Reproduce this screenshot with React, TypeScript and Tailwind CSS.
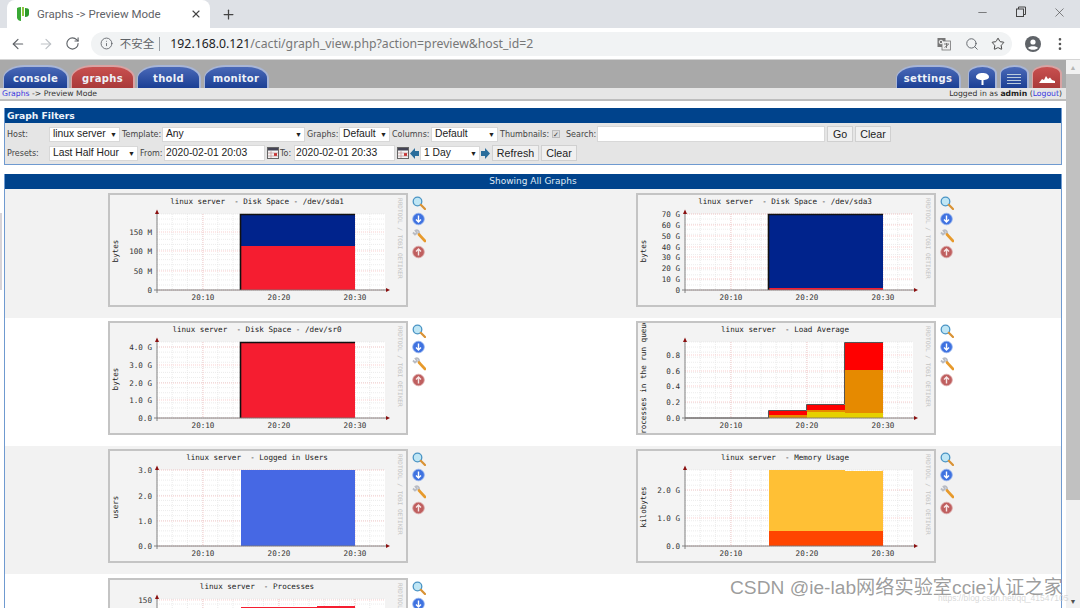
import React from 'react';
import { ArrowLeft, ArrowRight, RotateCw, Info, Plus, X, Minus, Search, Star, EllipsisVertical } from 'lucide-react';

const MONO = '"DejaVu Sans Mono", monospace';

type Block = { x: number; w: number; y: number; h: number; fill: string };
type GraphConfig = {
  title: string;
  yLabel: string;
  ticks: [string, number][];
  blocks: Block[];
  lines?: string[];
  lineWidth?: number;
  lineColor?: string;
};

const graphs: GraphConfig[] = [
  {
    title: 'linux server  - Disk Space - /dev/sda1',
    yLabel: 'bytes',
    ticks: [['150 M', 39], ['100 M', 58], ['50 M', 78], ['0', 97]],
    blocks: [
      { x: 133, w: 114, y: 21, h: 32, fill: '#00238c' },
      { x: 133, w: 114, y: 53, h: 44, fill: '#f51d30' },
    ],
    lines: ['M132.5 97V21.5H247'],
  },
  {
    title: 'linux server  - Disk Space - /dev/sda3',
    yLabel: 'bytes',
    ticks: [['70 G', 21], ['60 G', 32], ['50 G', 43], ['40 G', 54], ['30 G', 64], ['20 G', 75], ['10 G', 86], ['0', 97]],
    blocks: [
      { x: 133, w: 114, y: 21, h: 74, fill: '#00238c' },
      { x: 133, w: 114, y: 95, h: 2, fill: '#f51d30' },
    ],
    lines: ['M132.5 97V21.5H247'],
  },
  {
    title: 'linux server  - Disk Space - /dev/sr0',
    yLabel: 'bytes',
    ticks: [['4.0 G', 26], ['3.0 G', 44], ['2.0 G', 62], ['1.0 G', 79], ['0.0', 97]],
    blocks: [{ x: 133, w: 114, y: 21, h: 76, fill: '#f51d30' }],
    lines: ['M132.5 97V21.5H247'],
  },
  {
    title: 'linux server  - Load Average',
    yLabel: 'processes in the run queue',
    ticks: [['0.8', 34], ['0.6', 50], ['0.4', 65], ['0.2', 81], ['0.0', 97]],
    blocks: [
      { x: 133, w: 38, y: 90, h: 4, fill: '#ff0000' },
      { x: 133, w: 38, y: 94, h: 3, fill: '#e68a00' },
      { x: 171, w: 38, y: 84, h: 5, fill: '#ff0000' },
      { x: 171, w: 38, y: 89, h: 2, fill: '#e68a00' },
      { x: 171, w: 38, y: 91, h: 6, fill: '#e6d000' },
      { x: 209, w: 38, y: 21, h: 28, fill: '#ff0000' },
      { x: 209, w: 38, y: 49, h: 43, fill: '#e68a00' },
      { x: 209, w: 38, y: 92, h: 5, fill: '#e6d000' },
    ],
    lines: ['M49 97H132.5V89.5H170.5V83.5H208.5V21.5H247'],
    lineWidth: 1,
    lineColor: '#555',
  },
  {
    title: 'linux server  - Logged in Users',
    yLabel: 'users',
    ticks: [['3.0', 21], ['2.0', 47], ['1.0', 72], ['0.0', 97]],
    blocks: [{ x: 133, w: 114, y: 21, h: 76, fill: '#4668e4' }],
  },
  {
    title: 'linux server  - Memory Usage',
    yLabel: 'kilobytes',
    ticks: [['2.0 G', 41], ['1.0 G', 69], ['0.0', 97]],
    blocks: [
      { x: 133, w: 76, y: 21, h: 61, fill: '#ffc035' },
      { x: 209, w: 38, y: 22, h: 60, fill: '#ffc035' },
      { x: 133, w: 114, y: 82, h: 15, fill: '#ff4500' },
    ],
  },
  {
    title: 'linux server  - Processes',
    yLabel: 'processes',
    ticks: [['150', 22], ['100', 47], ['50', 72], ['0', 97]],
    blocks: [
      { x: 133, w: 76, y: 29, h: 3, fill: '#f51d30' },
      { x: 209, w: 38, y: 28, h: 4, fill: '#f51d30' },
    ],
  },
];

const minorX = Array.from({ length: 15 }, (_, i) => 49 + i * 15.2);
const minorY = Array.from({ length: 16 }, (_, i) => 21 + i * 5.07);

function Graph({ g }: { g: GraphConfig }) {
  return (
    <div className="w-[300px] h-[114px] shrink-0 border-2 border-[#c4c4c4] bg-[#f3f3f3]">
      <svg width="296" height="110" viewBox="2 2 296 110" className="block">
        <rect x="49" y="21" width="228" height="76" fill="#fff" />
        {minorY.map((y) => (
          <line key={y} x1="49" x2="277" y1={y} y2={y} stroke="#e4e4e4" strokeWidth="0.7" strokeDasharray="1 1" />
        ))}
        {minorX.map((x) => (
          <line key={x} x1={x} x2={x} y1="21" y2="97" stroke="#e4e4e4" strokeWidth="0.7" strokeDasharray="1 1" />
        ))}
        {g.ticks.map(([, y]) => (
          <line key={y} x1="49" x2="277" y1={y} y2={y} stroke="#f8bcbc" strokeWidth="0.7" strokeDasharray="1 1" />
        ))}
        {[95, 171, 247].map((x) => (
          <line key={x} x1={x} x2={x} y1="21" y2="97" stroke="#f8bcbc" strokeWidth="0.7" strokeDasharray="1 1" />
        ))}
        {g.blocks.map((b, i) => (
          <rect key={i} x={b.x} y={b.y} width={b.w} height={b.h} fill={b.fill} />
        ))}
        {g.lines?.map((d) => (
          <path key={d} d={d} fill="none" stroke={g.lineColor ?? '#111'} strokeWidth={g.lineWidth ?? 1.6} />
        ))}
        <path d="M46 97H279M49 100V19" stroke="#777" strokeWidth="0.9" fill="none" />
        <path d="M278 95L282 97L278 99ZM47 21L49 16.5L51 21Z" fill="#8a1010" />
        <g fontFamily={MONO} fontSize="7.6" fill="#333">
          <text x="149" y="11" textAnchor="middle" xmlSpace="preserve" fill="#222">{g.title}</text>
          {g.ticks.map(([t, y]) => (
            <text key={t} x="44" y={y + 3} textAnchor="end">{t}</text>
          ))}
          {[['20:10', 95], ['20:20', 171], ['20:30', 247]].map(([t, x]) => (
            <text key={t} x={x} y="107" textAnchor="middle">{t}</text>
          ))}
          <text transform={`translate(10 58) rotate(-90)`} textAnchor="middle" fill="#222">{g.yLabel}</text>
        </g>
        <text transform="translate(290 5) rotate(90)" fontFamily={MONO} fontSize="6.1" fill="#c4c4c4">RRDTOOL / TOBI OETIKER</text>
      </svg>
    </div>
  );
}

function GraphIcons() {
  return (
    <div className="flex flex-col ml-[4px] pt-[3px] gap-[2.4px]">
      <svg width="14" height="14" viewBox="0 0 14 14">
        <circle cx="5.5" cy="5.5" r="4.3" fill="#bfe6f5" stroke="#4a94c4" strokeWidth="1.3" />
        <path d="M8.8 8.8L13 13" stroke="#d99234" strokeWidth="2.2" strokeLinecap="round" />
      </svg>
      <svg width="14" height="14" viewBox="0 0 14 14">
        <circle cx="6.5" cy="7" r="5.8" fill="#3f72e0" stroke="#8fb0ee" strokeWidth="0.8" />
        <path d="M6.5 3.5V9.5M4 7.5L6.5 10L9 7.5" stroke="#fff" strokeWidth="1.4" fill="none" />
      </svg>
      <svg width="14" height="14" viewBox="0 0 14 14">
        <path d="M1 3.5L3 5.5L5 4L3.5 1.5C5.5 .5 7.5 2 7 4.5L8 6" stroke="#b9bcc4" strokeWidth="1.8" fill="none" />
        <path d="M7 5.5L13 12" stroke="#e79a2c" strokeWidth="2.6" strokeLinecap="round" />
      </svg>
      <svg width="14" height="14" viewBox="0 0 14 14">
        <circle cx="6.5" cy="7" r="5.8" fill="#bf5f5f" stroke="#dba6a6" strokeWidth="0.8" />
        <path d="M6.5 10.5V4.5M4 6.5L6.5 4L9 6.5" stroke="#f6e6e6" strokeWidth="1.4" fill="none" />
      </svg>
    </div>
  );
}

function Row({ left, right, shaded, className }: { left: GraphConfig; right?: GraphConfig; shaded: boolean; className: string }) {
  return (
    <div className={`grid grid-cols-2 ${className} ${shaded ? 'bg-[#f2f2f2]' : 'bg-white'}`}>
      <div className="flex pl-[103px]">
        <Graph g={left} />
        <GraphIcons />
      </div>
      {right && (
        <div className="flex pl-[103px]">
          <Graph g={right} />
          <GraphIcons />
        </div>
      )}
    </div>
  );
}

function NavTab({ label, width, red, children }: { label?: string; width: string; red?: boolean; children?: React.ReactNode }) {
  return (
    <div
      className={`${width} h-[23px] shrink-0 flex items-center justify-center pt-[2px] border-t-2 border-r-2 border-l [border-radius:22px_22px_0_0/13px_13px_0_0] bg-linear-to-b ${
        red ? 'from-[#c9504f] to-[#a93a3a] border-[#d9a3a3]' : 'from-[#4a69b8] to-[#1b3f94] border-[#a9b6d6]'
      }`}
    >
      {label && <span className="font-['DejaVu_Sans',sans-serif] font-bold text-[10px] tracking-[0.3px] text-[#eef1f8]">{label}</span>}
      {children}
    </div>
  );
}

function Sel({ text, width }: { text: string; width: string }) {
  return (
    <div className={`${width} h-[15px] shrink-0 bg-white border border-[#d8d8d8] flex items-center justify-between pl-[3px] pr-[2px] text-[10.3px] text-[#222]`}>
      <span>{text}</span>
      <span className="text-[7px] leading-none text-[#222]">▼</span>
    </div>
  );
}

function Txt({ text, width }: { text?: string; width: string }) {
  return (
    <div className={`${width} h-[16px] shrink-0 bg-white border border-[#d8d8d8] flex items-center pl-[1px] text-[10.3px] text-[#222]`}>{text}</div>
  );
}

function Lbl({ text, width }: { text: string; width: string }) {
  return <div className={`${width} shrink-0 pt-[1px] font-['DejaVu_Sans',sans-serif] text-[8px] text-[#444]`}>{text}</div>;
}

function Btn({ text, width }: { text: string; width: string }) {
  return (
    <div className={`${width} h-[16px] shrink-0 bg-[#f0f0f0] border border-[#d0d0d0] flex items-center justify-center text-[10.67px] text-[#222]`}>{text}</div>
  );
}

function Calendar() {
  return (
    <svg width="12" height="12" viewBox="0 0 12 12" className="shrink-0">
      <rect x="0.5" y="0.5" width="11" height="11" fill="#f4f4f4" stroke="#666" />
      <rect x="1" y="1" width="10" height="2.5" fill="#445" />
      <rect x="7" y="6" width="3" height="3" fill="#c33" />
      <path d="M1 6H11M1 9H11M4 4V11" stroke="#b88" strokeWidth="0.6" />
    </svg>
  );
}

function Shift({ flip }: { flip?: boolean }) {
  return (
    <svg width="9" height="11" viewBox="0 0 9 11" className="shrink-0">
      <path d={flip ? 'M0 3H4V0L9 5.5L4 11V8H0Z' : 'M9 3H5V0L0 5.5L5 11V8H9Z'} fill="#2a6d9c" />
    </svg>
  );
}

export default function App() {
  return (
    <div className="relative w-[1080px] h-[608px] overflow-hidden flex flex-col bg-white font-['Liberation_Sans',sans-serif]">
      {/* browser tab strip */}
      <div className="h-[28px] shrink-0 bg-[#dee1e6] flex items-stretch">
        <div className="ml-[7px] w-[203px] bg-white rounded-t-[8px] flex items-center pl-[9px] pr-[8px]">
          <svg width="14" height="16" viewBox="0 0 14 16" className="shrink-0">
            <path d="M1 2Q3 1 5 1V15Q2 15 1 12Z" fill="#39a935" />
            <path d="M6 1H8V10H6Z" fill="#8cc63f" />
            <path d="M9 2Q13 2 13 4V8Q13 11 9 11Z" fill="#2c9a2c" />
          </svg>
          <span className="ml-[7px] pt-[1px] flex-1 font-['Roboto',sans-serif] text-[11.5px] text-[#5f6368] whitespace-nowrap">Graphs -&gt; Preview Mode</span>
          <X size={12} strokeWidth={2.2} className="text-[#444]" />
        </div>
        <div className="ml-[11px] flex items-center">
          <Plus size={15} strokeWidth={2} className="text-[#444]" />
        </div>
        <div className="ml-auto flex items-center pr-[13px] pb-[4px] gap-[25.5px] text-[#444]">
          <Minus size={13} strokeWidth={1.2} />
          <svg width="12" height="12" viewBox="0 0 12 12" fill="none" stroke="currentColor">
            <rect x="1.5" y="3" width="7" height="7.5" />
            <path d="M3.5 3V1H10.5V8.5H8.5" />
          </svg>
          <X size={15} strokeWidth={1} />
        </div>
      </div>

      {/* browser toolbar */}
      <div className="h-[32px] shrink-0 bg-white flex items-center pl-[10px] pr-[12px] border-b border-[#d5d5d5]">
        <ArrowLeft size={16} strokeWidth={1.8} className="text-[#5f6368]" />
        <ArrowRight size={16} strokeWidth={1.8} className="ml-[12px] text-[#bdc1c6]" />
        <RotateCw size={15} strokeWidth={1.8} className="ml-[11px] text-[#5f6368]" />
        <div className="ml-[11px] w-[924px] h-[24px] rounded-full bg-[#f1f3f4] flex items-center pl-[9px] pr-[7px]">
          <Info size={13} strokeWidth={1.6} className="text-[#5f6368]" />
          <span className="ml-[7px] font-['Noto_Sans_CJK_SC',sans-serif] text-[11.5px] text-[#5f6368]">不安全</span>
          <span className="ml-[5px] w-px h-[14px] bg-[#9aa0a6]" />
          <span className="ml-[10px] pt-[1px] font-['Noto_Sans',sans-serif] text-[12.26px] text-[#777] whitespace-nowrap">
            <span className="text-[#202124]">192.168.0.121</span>/cacti/graph_view.php?action=preview&amp;host_id=2
          </span>
          <div className="ml-auto flex items-center gap-[12px] text-[#5f6368]">
            <svg width="14" height="14" viewBox="0 0 14 14" className="mr-[2px]">
              <rect x="0.5" y="1" width="8" height="9" fill="#777" />
              <rect x="5" y="4" width="8.5" height="9" fill="#eee" stroke="#777" strokeWidth="0.8" />
              <path d="M7 7H12M9.5 6V11M7.5 10.5L11.5 7.5" stroke="#666" strokeWidth="0.8" />
              <circle cx="4" cy="5" r="1.8" fill="none" stroke="#fff" strokeWidth="0.9" />
            </svg>
            <Search size={14} strokeWidth={1.6} />
            <Star size={14} strokeWidth={1.7} className="text-[#444]" />
          </div>
        </div>
        <svg width="16" height="16" viewBox="0 0 16 16" className="ml-[13px] shrink-0">
          <circle cx="8" cy="8" r="8" fill="#5f6368" />
          <circle cx="8" cy="6" r="2.6" fill="#fff" />
          <path d="M3 12C4.5 9.8 11.5 9.8 13 12C11 14.4 5 14.4 3 12Z" fill="#fff" />
        </svg>
        <EllipsisVertical size={16} strokeWidth={2} className="ml-[11px] text-[#555]" />
      </div>

      <div className="flex flex-1 min-h-0">
        {/* page */}
        <div className="w-[1066px] shrink-0 overflow-hidden bg-white">
          <div className="h-[28px] bg-[#a9a9a9] flex items-end pl-[3px] pr-[4px]">
            <NavTab label="console" width="w-[66px]" />
            <div className="w-[2px]" />
            <NavTab label="graphs" width="w-[64px]" red />
            <div className="w-[2px]" />
            <NavTab label="thold" width="w-[64px]" />
            <div className="w-[3px]" />
            <NavTab label="monitor" width="w-[65px]" />
            <div className="ml-auto" />
            <NavTab label="settings" width="w-[65px]" />
            <div className="w-[7px]" />
            <NavTab width="w-[29px]">
              <svg width="13" height="12" viewBox="0 0 13 12">
                <path d="M6.5 0C10 0 13 1.5 13 4C13 6 10 7 7.5 7V12H5.5V7C3 7 0 6 0 4C0 1.5 3 0 6.5 0Z" fill="#fff" />
              </svg>
            </NavTab>
            <div className="w-[3px]" />
            <NavTab width="w-[29px]">
              <svg width="14" height="10" viewBox="0 0 14 10">
                <path d="M0 .5H14M0 3.5H14M0 6.5H14M0 9.5H14" stroke="#bcd" strokeWidth="1" />
              </svg>
            </NavTab>
            <div className="w-[3px]" />
            <NavTab width="w-[30px]" red>
              <svg width="16" height="8" viewBox="0 0 16 8">
                <path d="M0 8L3 4L5 5L7 1L9 4L11 2.5L13 5L16 6V8Z" fill="#fff" />
              </svg>
            </NavTab>
          </div>

          <div className="h-[13px] bg-[#e6e6e6] border-b-2 border-[#bdbdbd] flex items-center justify-between pl-[2px] pr-[4px] font-['DejaVu_Sans',sans-serif] text-[7.7px] text-[#333]">
            <span>
              <span className="text-[#3a3ae0]">Graphs</span> -&gt; Preview Mode
            </span>
            <span>
              Logged in as <b className="text-[#222]">admin</b> (<span className="text-[#3a3ae0]">Logout</span>)
            </span>
          </div>

          {/* filters */}
          <div className="ml-[4px] mt-[7px] w-[1058px] border-x border-b border-[#6f9ad0]">
            <div className="h-[15px] bg-[#00438c] flex items-center pl-[2px] pt-[1px] font-['DejaVu_Sans',sans-serif] font-bold text-[9.2px] text-[#eef3fa]">Graph Filters</div>
            <div className="h-[41px] bg-[#e5e5e5] flex flex-col pt-[3px] gap-[3px] pl-[2px]">
              <div className="flex items-center">
                <Lbl text="Host:" width="w-[42px]" />
                <Sel text="linux server" width="w-[71px]" />
                <div className="w-[2px]" />
                <Lbl text="Template:" width="w-[40px]" />
                <Sel text="Any" width="w-[143px]" />
                <div className="w-[2px]" />
                <Lbl text="Graphs:" width="w-[32px]" />
                <Sel text="Default" width="w-[51px]" />
                <div className="w-[2px]" />
                <Lbl text="Columns:" width="w-[39px]" />
                <Sel text="Default" width="w-[67px]" />
                <div className="w-[2px]" />
                <Lbl text="Thumbnails:" width="w-[52px]" />
                <div className="w-[8px] h-[8px] shrink-0 bg-[#ddd] border border-[#bbb] flex items-center justify-center text-[7px] leading-none text-[#333]">✓</div>
                <div className="w-[6px]" />
                <Lbl text="Search:" width="w-[31px]" />
                <Txt width="w-[228px]" />
                <div className="w-[2px]" />
                <Btn text="Go" width="w-[26px]" />
                <div className="w-[2px]" />
                <Btn text="Clear" width="w-[36px]" />
              </div>
              <div className="flex items-center">
                <Lbl text="Presets:" width="w-[42px]" />
                <Sel text="Last Half Hour" width="w-[89px]" />
                <div className="w-[2px]" />
                <Lbl text="From:" width="w-[24px]" />
                <Txt text="2020-02-01 20:03" width="w-[101px]" />
                <div className="w-[2px]" />
                <Calendar />
                <div className="w-[1px]" />
                <Lbl text="To:" width="w-[14px]" />
                <Txt text="2020-02-01 20:33" width="w-[101px]" />
                <div className="w-[2px]" />
                <Calendar />
                <div className="w-[1px]" />
                <Shift />
                <div className="w-[1px]" />
                <Sel text="1 Day" width="w-[60px]" />
                <div className="w-[1px]" />
                <Shift flip />
                <div className="w-[2px]" />
                <Btn text="Refresh" width="w-[47px]" />
                <div className="w-[2px]" />
                <Btn text="Clear" width="w-[36px]" />
              </div>
            </div>
          </div>

          {/* graphs */}
          <div className="ml-[4px] mt-[9px] w-[1058px] border-x border-[#6f9ad0]">
            <div className="h-[15px] bg-[#00438c] flex items-center justify-center pt-[1px] font-['DejaVu_Sans',sans-serif] text-[9px] text-[#dfe8f3]">Showing All Graphs</div>
            <Row left={graphs[0]} right={graphs[1]} shaded className="h-[129px] pt-[4px]" />
            <Row left={graphs[2]} right={graphs[3]} shaded={false} className="h-[128px] pt-[3px]" />
            <Row left={graphs[4]} right={graphs[5]} shaded className="h-[128px] pt-[3px]" />
            <Row left={graphs[6]} shaded={false} className="h-[128px] pt-[4px]" />
          </div>
        </div>

        {/* scrollbar */}
        <div className="w-[14px] shrink-0 bg-[#f1f1f1] flex flex-col items-center">
          <div className="h-[14px] flex items-center text-[7px] leading-none text-[#b5b5b5]">▲</div>
          <div className="w-full h-[426px] bg-[#c1c1c1]" />
          <div className="mt-auto h-[14px] flex items-center text-[7px] leading-none text-[#505050]">▼</div>
        </div>
      </div>

      {/* edge marker left of the panels */}
      <div className="absolute left-0 top-[213px] w-[2px] h-[77px] bg-[#d8d4d8]" />

      {/* watermark */}
      <div className="absolute left-[730px] top-[576px] font-['Liberation_Sans','Noto_Sans_CJK_SC',sans-serif] text-[19.2px] leading-[24px] text-[#8c8c8c]/85 whitespace-nowrap">
        CSDN @ie-lab网络实验室ccie认证之家
      </div>
      <div className="absolute left-[938px] top-[592px] font-['Liberation_Sans',sans-serif] text-[8.5px] text-[#c8c8c8]/70 whitespace-nowrap">
        https://blog.csdn.net/qq_41547105
      </div>
    </div>
  );
}
